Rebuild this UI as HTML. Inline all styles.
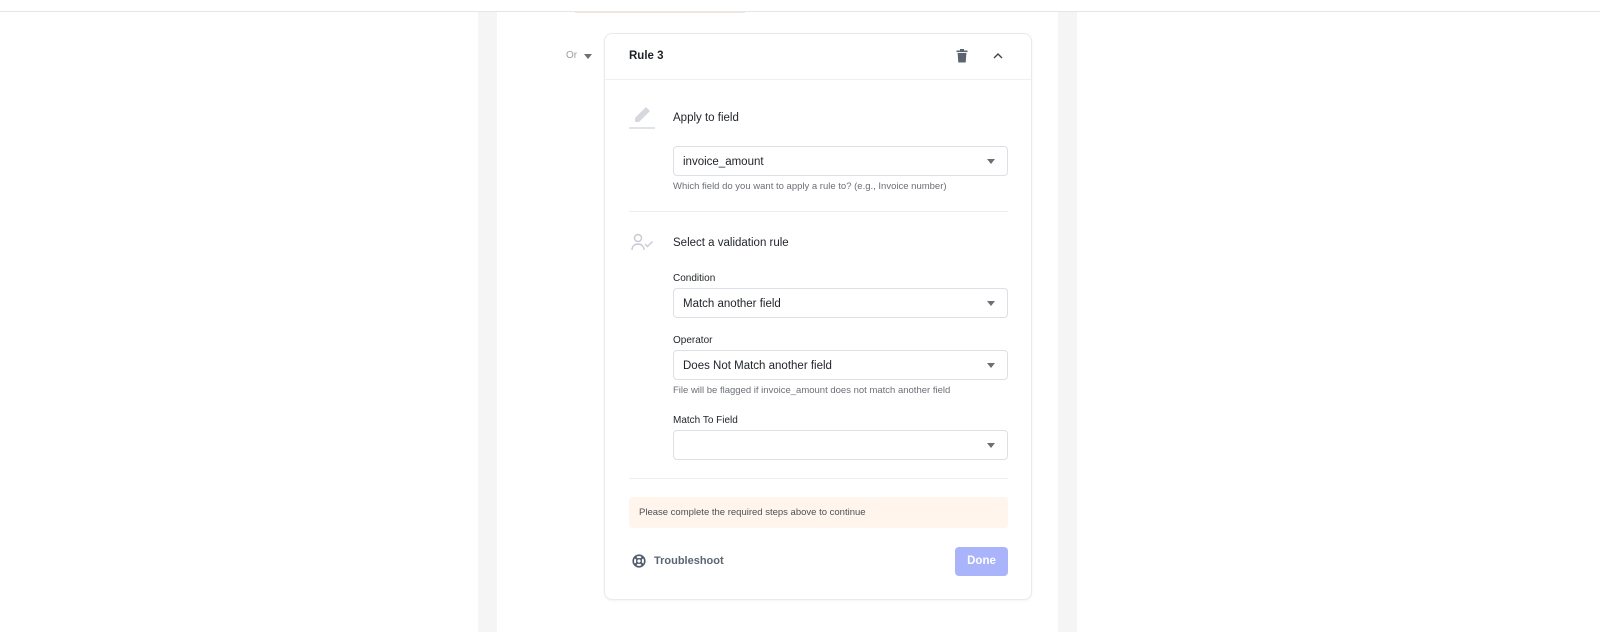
<!DOCTYPE html>
<html><head><meta charset="utf-8"><style>
*{box-sizing:border-box;margin:0;padding:0}
body{width:1600px;height:632px;background:#fff;font-family:"Liberation Sans",Arial,sans-serif;position:relative;overflow:hidden;color:#1f2328}
.abs{position:absolute}
.topline{left:0;top:11px;width:1600px;height:1px;background:#e6e6e6}
.gl{left:478px;top:12px;width:19px;height:620px;background:#f5f5f5}
.gr{left:1058px;top:12px;width:19px;height:620px;background:#f5f5f5}
.card{left:604px;top:33px;width:428px;height:567px;border:1px solid #e8eaed;border-radius:8px;background:#fff;box-shadow:0 1px 2px rgba(0,0,0,.05)}
.hdr{left:0;top:0;width:426px;height:46px;border-bottom:1px solid #eef0f2}
.t{font-size:11.5px;color:#1f2328}
.sel{left:68px;width:335px;height:30px;border:1px solid #dcdfe3;border-radius:4px;font-size:11.5px;padding:9px 0 0 9px;color:#1f2328}
.sel:after{content:"";position:absolute;right:12px;top:12px;border-left:4px solid transparent;border-right:4px solid transparent;border-top:5px solid #6b6f76}
.lbl{left:68px;font-size:10px;color:#1f2328}
.help{left:68px;font-size:9.5px;color:#6b6f76}
.hr{left:24px;width:379px;height:1px;background:#eceef0}
</style></head><body>
<div class="abs topline"></div>
<div class="abs gl"></div><div class="abs gr"></div>
<div class="abs" style="left:575px;top:12px;width:170px;height:1px;background:#f5e6dc"></div>
<div class="abs" style="left:566px;top:50px;font-size:10px;color:#9a9ea4">Or</div>
<div class="abs" style="left:584px;top:54px;border-left:4px solid transparent;border-right:4px solid transparent;border-top:5px solid #6b6f76"></div>
<div class="abs card">
 <div class="abs hdr"></div>
 <div class="abs t" style="left:24px;top:16px;font-weight:600">Rule 3</div>
 <svg class="abs" style="left:351px;top:15px" width="12" height="14" viewBox="0 0 12 14"><rect x="0.5" y="1.5" width="11" height="1.6" fill="#5c6470"/><rect x="4" y="0" width="4" height="1.6" fill="#5c6470"/><path d="M1.6 4h8.8l-.7 9.5H2.3z" fill="#5c6470"/></svg>
 <svg class="abs" style="left:387px;top:18px" width="12" height="8" viewBox="0 0 12 8"><path d="M2 6l4-4 4 4" stroke="#444" stroke-width="1.4" fill="none"/></svg>
 <svg class="abs" style="left:24px;top:69px" width="28" height="28" viewBox="0 0 28 28"><path d="M6 19l0-4 11-11 4 4-11 11z" fill="#d5d8dd"/><rect x="0" y="24" width="26" height="2" fill="#e1e3e7"/></svg>
 <div class="abs t" style="left:68px;top:78px">Apply to field</div>
 <div class="abs sel" style="top:112px">invoice_amount</div>
 <div class="abs help" style="top:147px">Which field do you want to apply a rule to? (e.g., Invoice number)</div>
 <div class="abs hr" style="top:177px"></div>
 <svg class="abs" style="left:26px;top:199px" width="24" height="18" viewBox="0 0 24 18"><circle cx="7" cy="5" r="3.5" stroke="#c5cad3" stroke-width="1.4" fill="none"/><path d="M1 17c0-4 3-6 6-6s6 2 6 6" stroke="#c5cad3" stroke-width="1.4" fill="none"/><path d="M14 11l2.5 2.5 5-5" stroke="#c5cad3" stroke-width="1.4" fill="none"/></svg>
 <div class="abs t" style="left:68px;top:203px">Select a validation rule</div>
 <div class="abs lbl" style="top:239px">Condition</div>
 <div class="abs sel" style="top:254px">Match another field</div>
 <div class="abs lbl" style="top:301px">Operator</div>
 <div class="abs sel" style="top:316px">Does Not Match another field</div>
 <div class="abs help" style="top:351px">File will be flagged if invoice_amount does not match another field</div>
 <div class="abs lbl" style="top:381px">Match To Field</div>
 <div class="abs sel" style="top:396px"></div>
 <div class="abs hr" style="top:444px"></div>
 <div class="abs" style="left:24px;top:463px;width:379px;height:31px;background:#fff5ec;border-radius:3px;font-size:9.5px;color:#4b5058;padding:10px 0 0 10px">Please complete the required steps above to continue</div>
 <svg class="abs" style="left:27px;top:520px" width="14" height="14" viewBox="0 0 14 14"><circle cx="7" cy="7" r="5.8" stroke="#4f5a6b" stroke-width="1.6" fill="none"/><circle cx="7" cy="7" r="2.3" stroke="#4f5a6b" stroke-width="1.4" fill="none"/><path d="M3 3l2.4 2.4M11 3L8.6 5.4M3 11l2.4-2.4M11 11L8.6 8.6" stroke="#4f5a6b" stroke-width="2"/></svg>
 <div class="abs" style="left:49px;top:521px;font-size:11px;color:#5b6574;font-weight:600">Troubleshoot</div>
 <div class="abs" style="left:350px;top:513px;width:53px;height:29px;background:#a9b4fb;border-radius:4px;color:#fff;font-size:11.5px;font-weight:bold;text-align:center;line-height:29px">Done</div>
</div>
</body></html>
